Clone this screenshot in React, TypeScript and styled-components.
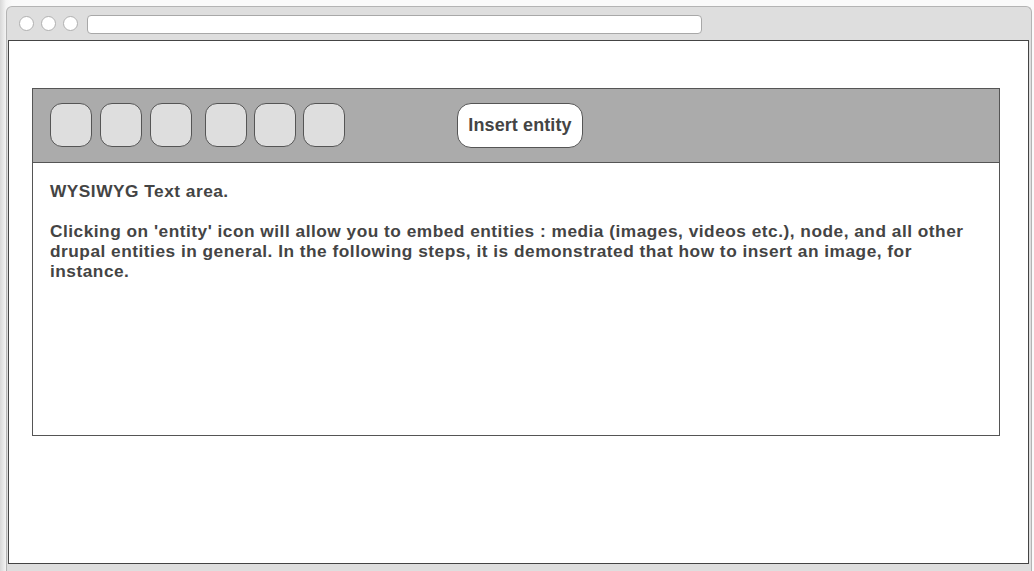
import styled, { createGlobalStyle } from "styled-components";

const GlobalStyle = createGlobalStyle`
  html, body {
    margin: 0;
    padding: 0;
    height: 100%;
    overflow: hidden;
  }
  body {
    background: linear-gradient(to right, #d8d8d8, #f4f4f4 6px, #fafafa 12px);
    font-family: "Liberation Sans", Arial, sans-serif;
  }
`;

const Frame = styled.div`
  margin: 6px 0 0 6px;
  width: 1026px;
  height: 565px;
  background: #dedede;
  border: 1px solid #b4b4b4;
  border-bottom: none;
  border-radius: 6px 6px 0 0;
  box-sizing: border-box;
`;

const TitleBar = styled.div`
  height: 33px;
  display: flex;
  align-items: center;
  padding: 0 0 0 12px;
  box-sizing: border-box;
`;

const Dot = styled.span`
  width: 13px;
  height: 13px;
  border-radius: 50%;
  background: #fff;
  border: 1px solid #b0b0b0;
  margin-right: 7px;
`;

const UrlBar = styled.div`
  margin-left: 2px;
  margin-top: 1px;
  width: 615px;
  height: 19px;
  background: #fff;
  border: 1px solid #a8a8a8;
  border-radius: 4px;
  box-sizing: border-box;
`;

const Page = styled.div`
  margin-left: 1px;
  width: 1021px;
  height: 524px;
  background: #fff;
  border: 1px solid #444;
  box-sizing: border-box;
  padding: 47px 0 0 23px;
`;

const Editor = styled.div`
  width: 968px;
  height: 348px;
  border: 1px solid #555;
  box-sizing: border-box;
  display: flex;
  flex-direction: column;
`;

const Toolbar = styled.div`
  height: 74px;
  background: #ababab;
  border-bottom: 1px solid #555;
  display: flex;
  align-items: center;
  padding: 0 0 1px 17px;
  box-sizing: border-box;
`;

const ToolGroup = styled.div<{ $gap: number; $space: number }>`
  display: flex;
  gap: ${(p) => p.$space}px;
  margin-right: ${(p) => p.$gap}px;
`;

const ToolButton = styled.div`
  width: 42px;
  height: 44px;
  background: #dedede;
  border: 1px solid #555;
  border-radius: 12px;
  box-sizing: border-box;
`;

const InsertButton = styled.div`
  width: 126px;
  height: 45px;
  background: #fff;
  border: 1px solid #555;
  border-radius: 14px;
  box-sizing: border-box;
  display: flex;
  align-items: center;
  justify-content: center;
  font-weight: bold;
  font-size: 18px;
  letter-spacing: 0.1px;
  color: #444;
`;

const TextArea = styled.div`
  padding: 18px 17px 0 17px;
  color: #444;
  font-weight: bold;
  font-size: 17.3px;
  letter-spacing: 0.5px;
  line-height: 20px;

  p {
    margin: 0 0 20px 0;
  }
`;

export default function App() {
  return (
    <>
      <GlobalStyle />
      <Frame>
        <TitleBar>
          <Dot />
          <Dot />
          <Dot />
          <UrlBar />
        </TitleBar>
        <Page>
          <Editor>
            <Toolbar>
              <ToolGroup $space={8} $gap={13}>
                <ToolButton />
                <ToolButton />
                <ToolButton />
              </ToolGroup>
              <ToolGroup $space={7} $gap={112}>
                <ToolButton />
                <ToolButton />
                <ToolButton />
              </ToolGroup>
              <InsertButton>Insert entity</InsertButton>
            </Toolbar>
            <TextArea>
              <p>WYSIWYG Text area.</p>
              <p>
                Clicking on 'entity' icon will allow you to embed entities : media (images, videos etc.), node, and all other
                drupal entities in general. In the following steps, it is demonstrated that how to insert an image, for
                instance.
              </p>
            </TextArea>
          </Editor>
        </Page>
      </Frame>
    </>
  );
}
